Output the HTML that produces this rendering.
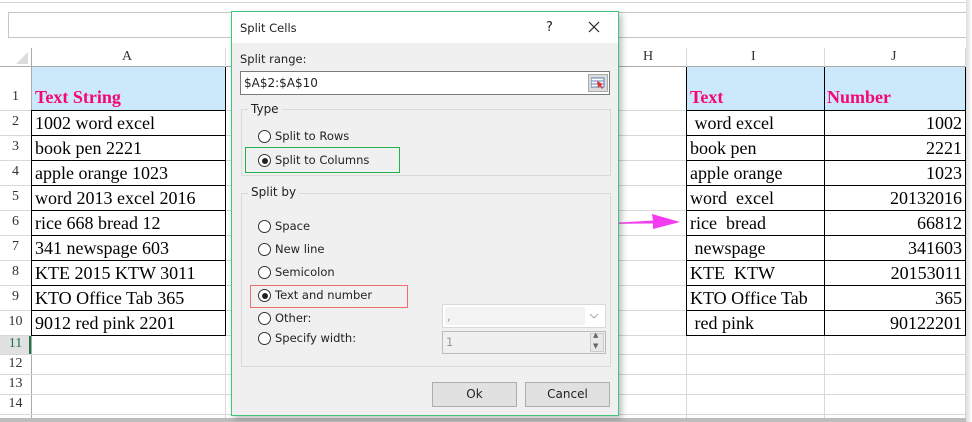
<!DOCTYPE html>
<html><head><meta charset="utf-8"><style>
*{margin:0;padding:0;box-sizing:border-box}
body{width:972px;height:422px;background:#fff;position:relative;overflow:hidden;font-family:"Liberation Serif",serif}
.a{position:absolute}
.hl{position:absolute;height:1px;background:#d8d8d8}
.vl{position:absolute;width:1px;background:#d8d8d8}
.rn{position:absolute;left:0;width:31px;text-align:center;font-size:14px;color:#333}
.cell{position:absolute;font-size:18px;color:#000;line-height:24px;white-space:pre;padding-left:3px}
.num{text-align:right;padding-right:3px;padding-left:0}
.hd{position:absolute;font-size:18px;font-weight:bold;color:#f5076f;white-space:pre}
.d{font-family:"DejaVu Sans","Liberation Sans",sans-serif;font-size:11.5px;color:#222}
.rad{position:absolute;width:13px;height:13px;border:1px solid #333;border-radius:50%;background:#fff}
.rad.on::after{content:"";position:absolute;left:2.5px;top:2.5px;width:6px;height:6px;border-radius:50%;background:#222}
.lbl{position:absolute;white-space:nowrap}
</style></head><body>
<div class="a" style="left:0;top:2px;width:972px;height:1px;background:#d4d4d4"></div>
<div class="a" style="left:8px;top:12px;width:960px;height:26px;border:1px solid #c6c6c6"></div>
<div class="a" style="left:0;top:48px;width:966px;height:19px;background:#fff;border-bottom:1px solid #ababab"></div>
<div class="a" style="left:16px;top:52px;width:0;height:0;border-left:12px solid transparent;border-bottom:12px solid #dcdcdc"></div>
<div class="a" style="left:0;top:48px;width:966px;text-align:left;font-size:14px;color:#333">
<span class="a" style="left:122px;top:1px">A</span><span class="a" style="left:643px;top:1px">H</span><span class="a" style="left:751px;top:1px">I</span><span class="a" style="left:891px;top:1px">J</span></div>
<div class="vl" style="left:31px;top:48px;height:370px;background:#ababab"></div>
<div class="vl" style="left:225px;top:48px;height:370px"></div>
<div class="vl" style="left:686px;top:48px;height:370px"></div>
<div class="vl" style="left:824px;top:48px;height:370px"></div>
<div class="vl" style="left:965px;top:48px;height:370px"></div>
<div class="hl" style="left:0;top:110px;width:966px"></div>
<div class="hl" style="left:0;top:135px;width:966px"></div>
<div class="hl" style="left:0;top:160px;width:966px"></div>
<div class="hl" style="left:0;top:185px;width:966px"></div>
<div class="hl" style="left:0;top:210px;width:966px"></div>
<div class="hl" style="left:0;top:235px;width:966px"></div>
<div class="hl" style="left:0;top:260px;width:966px"></div>
<div class="hl" style="left:0;top:285px;width:966px"></div>
<div class="hl" style="left:0;top:310px;width:966px"></div>
<div class="hl" style="left:0;top:335px;width:966px"></div>
<div class="hl" style="left:0;top:354px;width:966px"></div>
<div class="hl" style="left:0;top:374px;width:966px"></div>
<div class="hl" style="left:0;top:394px;width:966px"></div>
<div class="hl" style="left:0;top:414px;width:966px"></div>
<div class="a" style="left:0;top:418px;width:972px;height:4px;background:#bcbcbc"></div>
<div class="a" style="left:966px;top:0;width:6px;height:422px;background:linear-gradient(90deg,#ddd,#fff)"></div>
<div class="rn" style="top:89px">1</div><div class="rn" style="top:114px">2</div><div class="rn" style="top:139px">3</div><div class="rn" style="top:164px">4</div><div class="rn" style="top:189px">5</div><div class="rn" style="top:214px">6</div><div class="rn" style="top:239px">7</div><div class="rn" style="top:264px">8</div><div class="rn" style="top:289px">9</div><div class="rn" style="top:314px">10</div>
<div class="a" style="left:0;top:336px;width:31px;height:18px;background:#e1e1e1;border-right:2px solid #217346"></div>
<div class="rn" style="top:336px;color:#217346">11</div><div class="rn" style="top:356px">12</div><div class="rn" style="top:376px">13</div><div class="rn" style="top:396px">14</div>
<div class="a" style="left:32px;top:67px;width:194px;height:43px;background:#cce8fb"></div>
<div class="hd" style="left:35px;top:87px">Text String</div>
<div class="a" style="left:31px;top:110px;width:195px;height:226px;border:1px solid #000"></div>
<div class="a" style="left:225px;top:67px;width:1px;height:44px;background:#000"></div>
<div class="a" style="left:31px;top:135px;width:195px;height:1px;background:#000;box-shadow:0 25px 0 #000,0 50px 0 #000,0 75px 0 #000,0 100px 0 #000,0 125px 0 #000,0 150px 0 #000,0 175px 0 #000"></div>
<div class="cell" style="left:32px;top:111px">1002 word excel</div>
<div class="cell" style="left:32px;top:136px">book pen 2221</div>
<div class="cell" style="left:32px;top:161px">apple orange 1023</div>
<div class="cell" style="left:32px;top:186px">word 2013 excel 2016</div>
<div class="cell" style="left:32px;top:211px">rice 668 bread 12</div>
<div class="cell" style="left:32px;top:236px">341 newspage 603</div>
<div class="cell" style="left:32px;top:261px">KTE 2015 KTW 3011</div>
<div class="cell" style="left:32px;top:286px">KTO Office Tab 365</div>
<div class="cell" style="left:32px;top:311px">9012 red pink 2201</div>
<div class="a" style="left:686px;top:67px;width:280px;height:43px;background:#cce8fb"></div>
<div class="a" style="left:686px;top:67px;width:1px;height:44px;background:#000"></div>
<div class="a" style="left:824px;top:67px;width:1px;height:44px;background:#000"></div>
<div class="a" style="left:965px;top:67px;width:1px;height:44px;background:#000"></div>
<div class="hd" style="left:690px;top:87px">Text</div>
<div class="hd" style="left:827px;top:87px">Number</div>
<div class="a" style="left:686px;top:110px;width:280px;height:226px;border:1px solid #000"></div>
<div class="a" style="left:824px;top:110px;width:1px;height:226px;background:#000"></div>
<div class="a" style="left:686px;top:135px;width:280px;height:1px;background:#000;box-shadow:0 25px 0 #000,0 50px 0 #000,0 75px 0 #000,0 100px 0 #000,0 125px 0 #000,0 150px 0 #000,0 175px 0 #000"></div>
<div class="cell" style="left:687px;top:111px"> word excel</div>
<div class="cell" style="left:687px;top:136px">book pen</div>
<div class="cell" style="left:687px;top:161px">apple orange</div>
<div class="cell" style="left:687px;top:186px">word  excel</div>
<div class="cell" style="left:687px;top:211px">rice  bread</div>
<div class="cell" style="left:687px;top:236px"> newspage</div>
<div class="cell" style="left:687px;top:261px">KTE  KTW</div>
<div class="cell" style="left:687px;top:286px">KTO Office Tab</div>
<div class="cell" style="left:687px;top:311px"> red pink</div>
<div class="cell num" style="left:825px;top:111px;width:140px">1002</div>
<div class="cell num" style="left:825px;top:136px;width:140px">2221</div>
<div class="cell num" style="left:825px;top:161px;width:140px">1023</div>
<div class="cell num" style="left:825px;top:186px;width:140px">20132016</div>
<div class="cell num" style="left:825px;top:211px;width:140px">66812</div>
<div class="cell num" style="left:825px;top:236px;width:140px">341603</div>
<div class="cell num" style="left:825px;top:261px;width:140px">20153011</div>
<div class="cell num" style="left:825px;top:286px;width:140px">365</div>
<div class="cell num" style="left:825px;top:311px;width:140px">90122201</div>
<svg class="a" style="left:590px;top:210px" width="100" height="26"><polygon points="6,14 63,10.5 62,4 90,12 63,19 63,13.5" fill="#f33cf0"/></svg>
<div class="a d" style="left:231px;top:11px;width:388px;height:405px;background:#f0f0f0;border:1px solid #3fc77c;box-shadow:3px 3px 6px rgba(0,0,0,.25)">
<div class="a" style="left:0;top:0;width:386px;height:31px;background:#fff"></div>
<div class="lbl" style="left:8px;top:9px">Split Cells</div>
<div class="lbl" style="left:314px;top:8px;font-size:13px">?</div>
<svg class="a" style="left:356px;top:9px" width="12" height="12"><path d="M1 1L11 11M11 1L1 11" stroke="#222" stroke-width="1.2"/></svg>
<div class="lbl" style="left:8px;top:40px">Split range:</div>
<div class="a" style="left:8px;top:59px;width:370px;height:24px;background:#fff;border:1px solid #7a7a7a"></div>
<div class="lbl" style="left:12px;top:64px;font-size:12px">$A$2:$A$10</div>
<div class="a" style="left:356px;top:62px;width:20px;height:18px;background:#dcdcdc;border:1px solid #aaa"></div>
<svg class="a" style="left:359px;top:65px" width="15" height="12"><rect x="0" y="1" width="13" height="9" fill="#fff" stroke="#5b7fb5"/><path d="M0 4H13M0 7H13" stroke="#5b7fb5"/><path d="M6 4l6 3-2 1 2 3-1 1-2-3-2 2z" fill="#d33"/></svg>
<div class="a" style="left:9px;top:97px;width:370px;height:67px;border:1px solid #dadada"></div>
<div class="lbl" style="left:16px;top:90px;background:#f0f0f0;padding:0 3px;font-size:12px">Type</div>
<div class="rad" style="left:26px;top:118px"></div>
<div class="lbl" style="left:43px;top:117px">Split to Rows</div>
<div class="a" style="left:13px;top:135px;width:155px;height:26px;border:1px solid #22b14c"></div>
<div class="rad on" style="left:26px;top:142px"></div>
<div class="lbl" style="left:43px;top:141px">Split to Columns</div>
<div class="a" style="left:9px;top:181px;width:370px;height:174px;border:1px solid #dadada"></div>
<div class="lbl" style="left:16px;top:173px;background:#f0f0f0;padding:0 3px;font-size:12px">Split by</div>
<div class="rad" style="left:26px;top:208px"></div><div class="lbl" style="left:43px;top:207px">Space</div>
<div class="rad" style="left:26px;top:231px"></div><div class="lbl" style="left:43px;top:230px">New line</div>
<div class="rad" style="left:26px;top:254px"></div><div class="lbl" style="left:43px;top:253px">Semicolon</div>
<div class="a" style="left:18px;top:273px;width:158px;height:23px;border:1px solid #f07070"></div>
<div class="rad on" style="left:26px;top:277px"></div><div class="lbl" style="left:43px;top:276px">Text and number</div>
<div class="rad" style="left:26px;top:300px"></div><div class="lbl" style="left:43px;top:299px">Other:</div>
<div class="rad" style="left:26px;top:320px"></div><div class="lbl" style="left:43px;top:319px">Specify width:</div>
<div class="a" style="left:210px;top:292px;width:164px;height:24px;border:1px solid #d9d9d9;background:#fff"></div>
<div class="a" style="left:213px;top:295px;width:140px;height:18px;background:#f3f3f3"></div>
<svg class="a" style="left:357px;top:300px" width="10" height="8"><path d="M1 2l4 4 4-4" stroke="#aaa" fill="none"/></svg>
<div class="lbl" style="left:215px;top:297px;color:#999">,</div>
<div class="a" style="left:210px;top:319px;width:164px;height:23px;border:1px solid #bbb;background:#f0f0f0"></div>
<div class="lbl" style="left:214px;top:323px;color:#999">1</div>
<div class="a" style="left:358px;top:321px;width:14px;height:19px;border:1px solid #ccc;background:#e8e8e8"></div>
<div class="lbl" style="left:361px;top:319px;font-size:7px;color:#666">▲</div><div class="lbl" style="left:361px;top:330px;font-size:7px;color:#666">▼</div>
<div class="a" style="left:200px;top:370px;width:85px;height:25px;background:#e1e1e1;border:1px solid #adadad;text-align:center;line-height:23px;font-size:12px">Ok</div>
<div class="a" style="left:293px;top:370px;width:85px;height:25px;background:#e1e1e1;border:1px solid #adadad;text-align:center;line-height:23px;font-size:12px">Cancel</div>
</div>
</body></html>
